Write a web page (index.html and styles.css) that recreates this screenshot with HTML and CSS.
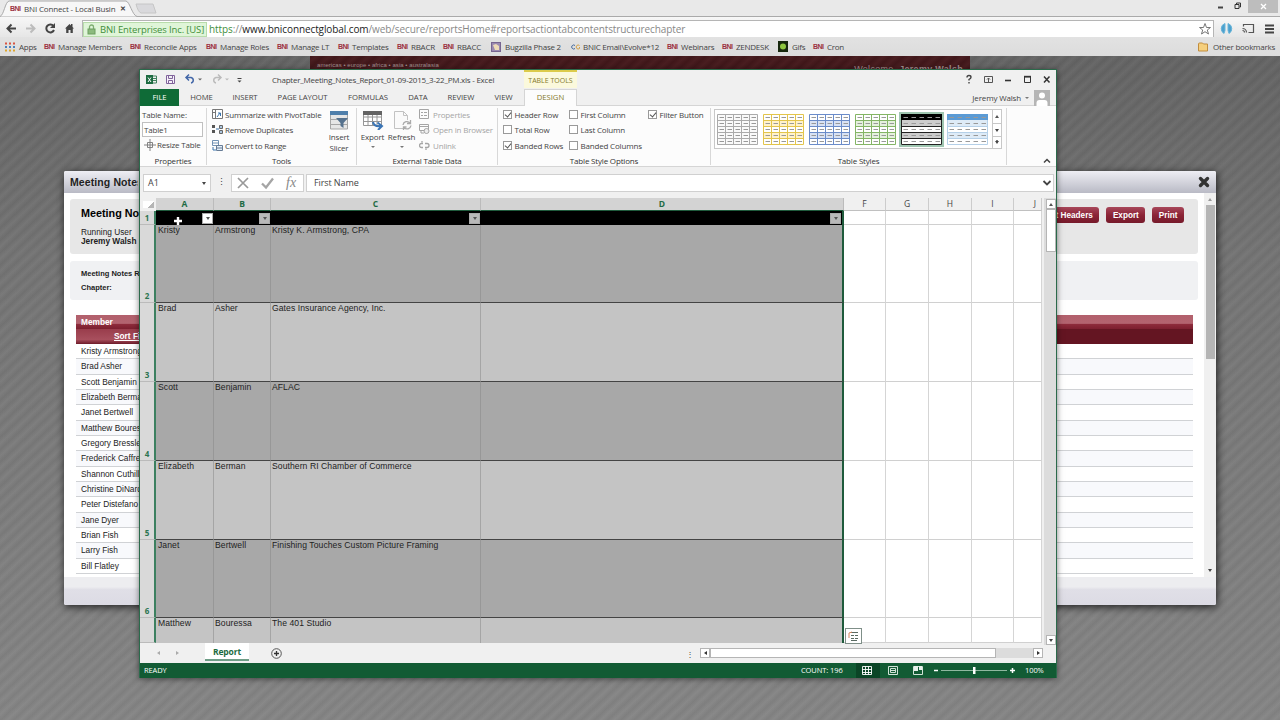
FILE: index.html
```html
<!DOCTYPE html>
<html lang="en">
<head>
  <meta charset="UTF-8">
  <title>BNI Connect - Local Business</title>
  <link rel="stylesheet" href="styles.css">
</head>
<body>

<svg class="defs" width="0" height="0">
  <symbol id="table-lines" viewBox="0 0 41 31">
    <path d="M.5.5h40v30H.5zM.5 6.5h40M.5 12.5h40M.5 18.5h40M.5 24.5h40M8.5 0v31M16.5 0v31M24.5 0v31M32.5 0v31" fill="none" stroke="currentColor"/>
  </symbol>
  <symbol id="table-dashes" viewBox="0 0 41 31">
    <path d="M2.500 3.500h37M2.500 9.500h37M2.500 15.500h37M2.500 21.500h37M2.500 27.500h37" fill="none" stroke="currentColor" stroke-dasharray="4.500 3.500"/>
  </symbol>
</svg>

<header class="browser">
  <div class="tab-strip">
    <svg class="tab-shape" width="160" height="17" viewBox="0 0 160 17">
      <path d="M0 16.5C4 15 5 2 9 1H126C130 2 132 15 137 16.5" fill="#f7f7f7" stroke="#aaa"/>
      <path d="M136 4H153L156 13H141Q138 12 136 4z" fill="#d9d9dc" stroke="#c6c6c6"/>
    </svg>
    <div class="tab-text"><b class="bni">BNI</b><span class="tab-name">BNI Connect - Local Busin</span><span class="tab-x">✕</span></div>
    <div class="window-buttons">
      <svg width="66" height="13" viewBox="0 0 66 13">
        <path d="M5 7.5h5" stroke="#444" stroke-width="2"/>
        <path d="M22 4.500h4v4h-4zM23.500 4v-1h4v4h-1" fill="none" stroke="#333"/>
        <rect x="35" width="30" height="13" fill="#bdbdbd"/>
        <path d="M48 4l5 5M53 4l-5 5" stroke="#fff" stroke-width="1.300"/>
      </svg>
    </div>
  </div>

  <div class="toolbar">
    <svg class="nav-icons" width="82" height="20" viewBox="0 0 82 20">
      <path d="M16 11.500H8M11.500 7.500l-4 4 4 4" fill="none" stroke="#444" stroke-width="2"/>
      <path d="M26 11.500h8M30.500 7.500l4 4-4 4" fill="none" stroke="#bcbcbc" stroke-width="2"/>
      <path d="M53.500 9A4 4 0 1 0 54 13" fill="none" stroke="#444" stroke-width="2"/>
      <path d="M55 6v5h-5z" fill="#444"/>
      <path d="M65 11.500l4.500-4.500 1.500 1.500V7h1.500v3l1.500 1.500h-1.200V16h-2.300v-3h-2v3H66.200v-4.500z" fill="#444"/>
    </svg>
    <div class="address">
      <div class="ssl">
        <svg width="9" height="11" viewBox="0 0 9 11"><path d="M2.500 5V3a2 2 0 0 1 4 0v2" fill="none" stroke="#7dad70" stroke-width="1.300"/><rect x="1" y="5" width="7" height="5" fill="#8cbb7d" stroke="#6c9e60"/></svg>
        <span>BNI Enterprises Inc. [US]</span>
      </div>
      <div class="url"><span class="scheme">https</span>://<span class="host">www.bniconnectglobal.com</span>/web/secure/reportsHome#reportsactiontabcontentstructurechapter</div>
      <svg class="star" width="14" height="14" viewBox="0 0 14 14"><path d="M7 1.500l1.500 4h4L9.300 8l1.200 4L7 9.700 3.500 12l1.200-4L1.500 5.500h4z" fill="#fff" stroke="#777"/></svg>
    </div>
    <svg width="66" height="20" viewBox="0 0 66 20">
      <path d="M11 6.500a5.500 5.500 0 0 0-1 10l1-3V9zM14 6.500a5.500 5.500 0 0 1 1 10l-1-3V9z" fill="#4da0cd" stroke="#68b6da"/>
      <path d="M29.500 9.500v-2h10v8h-5M28.500 11.500a4 4 0 0 1 4 4M28.500 13.500a2 2 0 0 1 2 2" fill="none" stroke="#555" stroke-width="1.200"/>
      <path d="M51 8.500h9M51 12h9M51 15.500h9" stroke="#444" stroke-width="2"/>
    </svg>
  </div>

  <nav class="bookmarks">
    <a><svg width="10" height="10" viewBox="0 0 10 10"><path d="M0 1.500h10" stroke="#d75442" stroke-width="2" stroke-dasharray="2 2"/><path d="M0 5h10" stroke="#4a80bc" stroke-width="2" stroke-dasharray="2 2"/><path d="M0 8.500h10" stroke="#dda62d" stroke-width="2" stroke-dasharray="2 2"/></svg><span class="apps">Apps</span></a>
    <a><b class="bni">BNI</b>Manage Members</a>
    <a><b class="bni">BNI</b>Reconcile Apps</a>
    <a><b class="bni">BNI</b>Manage Roles</a>
    <a><b class="bni">BNI</b>Manage LT</a>
    <a><b class="bni">BNI</b>Templates</a>
    <a><b class="bni">BNI</b>RBACR</a>
    <a><b class="bni">BNI</b>RBACC</a>
    <a><svg width="14" height="10" viewBox="0 0 14 10"><rect x=".5" y=".5" width="9" height="9" fill="#9b8ab0" stroke="#776590"/><path d="M2 3l3-1 3 2v4H4z" fill="#efdcb7"/></svg>Bugzilla Phase 2</a>
    <a><svg width="13" height="10" viewBox="0 0 13 10"><path d="M5 3.500a2 2 0 1 0 0 3" fill="none" stroke="#456a9c"/><path d="M9.500 3.500a2 2 0 1 0 0 3V5" fill="none" stroke="#d3a044"/></svg>BNIC Email\Evolve*12</a>
    <a><b class="bni">BNI</b>Webinars</a>
    <a><b class="bni">BNI</b>ZENDESK</a>
    <a><svg width="14" height="11" viewBox="0 0 14 11"><rect width="10" height="11" fill="#17280d"/><circle cx="5" cy="5.500" r="3" fill="#8ec63f"/></svg>Gifs</a>
    <a><b class="bni">BNI</b>Cron</a>
    <a class="other"><svg width="15" height="10" viewBox="0 0 15 10"><path d="M.5 2q0-1 1-1h3l1 1h4v7h-9z" fill="#f5cf7d" stroke="#c18d3e"/></svg>Other bookmarks</a>
  </nav>
</header>

<main class="page">
  <div class="site-bar">
    <span class="regions">americas • europe • africa • asia • australasia</span>
    <span class="welcome">Welcome, <b>Jeremy Walsh</b></span>
  </div>

  <section class="dialog">
    <div class="dialog-title">
      <span>Meeting Notes</span>
      <svg width="12" height="12" viewBox="0 0 12 12"><path d="M2.500 2.500l7 7M9.500 2.500l-7 7" stroke="#333" stroke-width="3.400" stroke-linecap="round"/></svg>
    </div>
    <div class="dialog-body">
      <div class="report">
        <div class="report-head">
          <div class="report-user">
            <h2>Meeting Notes</h2>
            <p>Running User</p>
            <p><b>Jeremy Walsh</b></p>
          </div>
          <div class="actions"><button>Edit Headers</button><button>Export</button><button>Print</button></div>
        </div>
        <div class="report-params">
          <div>Meeting Notes Report</div>
          <div>Chapter:</div>
        </div>
        <div class="members">
          <div class="members-head">Member</div>
          <div class="members-sort">Sort First</div>
          <div class="member">Kristy Armstrong</div>
          <div class="member">Brad Asher</div>
          <div class="member">Scott Benjamin</div>
          <div class="member">Elizabeth Berman</div>
          <div class="member">Janet Bertwell</div>
          <div class="member">Matthew Bouressa</div>
          <div class="member">Gregory Bressler</div>
          <div class="member">Frederick Caffrey</div>
          <div class="member">Shannon Cuthill</div>
          <div class="member">Christine DiNardo</div>
          <div class="member">Peter Distefano</div>
          <div class="member">Jane Dyer</div>
          <div class="member">Brian Fish</div>
          <div class="member">Larry Fish</div>
          <div class="member">Bill Flatley</div>
        </div>
      </div>
      <div class="dialog-scroll"><i class="up"></i><div class="thumb"></div><i class="down"></i></div>
    </div>
    <div class="dialog-foot"></div>
  </section>

  <section class="excel">
    <div class="title-bar">
      <svg width="112" height="18" viewBox="0 0 112 18">
        <rect x="6" y="5" width="7" height="9" fill="#1d6b41"/><path d="M8 7.500l3 4.500M11 7.500l-3 4.500" stroke="#fff"/><path d="M13 6h3.500v7H13M13 8.500h3M13 10.500h3" fill="none" stroke="#42815f"/>
        <path d="M26.500 5.500h8v8h-8zM28.500 5.500v3h4v-3M28.500 13v-2.500h4V13" fill="#f7f2fa" stroke="#80639b"/>
        <path d="M46 7.500h5a2.800 2.800 0 0 1 0 5.500M49 4.500l-3 3 3 3" fill="none" stroke="#4367a8" stroke-width="1.500"/>
        <path d="M58 8.500h4l-2 2z" fill="#666"/>
        <path d="M81 7.500h-5a2.800 2.800 0 0 0 0 5.500M78 4.500l3 3-3 3" fill="none" stroke="#bbb" stroke-width="1.500"/>
        <path d="M85 8.500h4l-2 2z" fill="#bbb"/>
        <path d="M97.500 8.500h4" stroke="#444"/><path d="M97.500 10.500h4l-2 2z" fill="#444"/>
      </svg>
      <span class="file-name">Chapter_Meeting_Notes_Report_01-09-2015_3-22_PM.xls - Excel</span>
      <span class="table-tools">TABLE TOOLS</span>
      <svg class="title-icons" width="94" height="18" viewBox="0 0 94 18">
        <path d="M5 7.500q0-2 2-2t2 1.700q0 1-2 2.300v1M7 12v1.500" fill="none" stroke="#444" stroke-width="1.400"/>
        <path d="M22.500 6.500h8v6h-8zM26.500 12V8M25 9.500L26.500 8 28 9.500" fill="none" stroke="#555"/>
        <path d="M43 10.500h6" stroke="#333" stroke-width="1.600"/>
        <path d="M62.500 6.500h6v6h-6zM62 6.500h7" fill="none" stroke="#333"/><path d="M62 6.700h7" stroke="#333" stroke-width="1.800"/>
        <path d="M82 6.500l5.500 6M87.500 6.500l-5.500 6" stroke="#333" stroke-width="1.500"/>
      </svg>
    </div>

    <div class="ribbon-tabs">
      <span class="file">FILE</span>
      <span>HOME</span>
      <span>INSERT</span>
      <span>PAGE LAYOUT</span>
      <span>FORMULAS</span>
      <span>DATA</span>
      <span>REVIEW</span>
      <span>VIEW</span>
      <span class="active">DESIGN</span>
      <span class="account">Jeremy Walsh<i class="caret"></i>
        <svg width="16" height="16" viewBox="0 0 16 16"><rect width="16" height="16" fill="#b5b5b5"/><circle cx="8" cy="5.500" r="3" fill="#fff"/><path d="M2.500 16v-3q0-3 3-3h5q3 0 3 3v3z" fill="#fff"/></svg>
      </span>
    </div>

    <div class="ribbon">
      <div class="group properties">
        <div class="lines">
          <span>Table Name:</span>
          <span class="name-input">Table1</span>
          <span class="resize"><svg width="12" height="12" viewBox="0 0 12 12"><path d="M3.500 3.500h5v5h-5zM6 0v3M6 9v3M0 6h3M9 6h3M3.500 6h5M6 3.500v5" fill="none" stroke="#777" stroke-width=".9"/></svg>Resize Table</span>
        </div>
        <div class="label">Properties</div>
      </div>

      <div class="group tools">
        <div class="row">
          <div class="lines">
            <span><svg width="12" height="11" viewBox="0 0 12 11"><path d="M.5.5h10v9H.5zM3.500.5v9M.5 3.500h3" fill="#fff" stroke="#777"/><path d="M5 8l3-4M8.500 7V4H6" fill="none" stroke="#3b75ad"/></svg>Summarize with PivotTable</span>
            <span><svg width="12" height="11" viewBox="0 0 12 11"><path d="M0 1h3v3H0zM0 6h3v3H0z" fill="#555"/><path d="M4 5h3" stroke="#3b75ad"/><path d="M7.500 1.500h3v3h-3zM7.500 6.500h3v3h-3z" fill="#acc6df" stroke="#666"/></svg>Remove Duplicates</span>
            <span><svg width="12" height="11" viewBox="0 0 12 11"><path d="M.5.500h6v5h-6zM.5 3h6" fill="#fff" stroke="#7191b3"/><path d="M4.500 5.500h6v5h-6zM4.500 8h6" fill="#e3edf7" stroke="#677c96"/><path d="M1 7v3h3" fill="none" stroke="#3b75ad"/></svg>Convert to Range</span>
          </div>
          <div class="big">
            <svg width="22" height="20" viewBox="0 0 22 20"><rect x="2" y="1" width="18" height="4" fill="#4f7fab"/><path d="M2.500 5v14h17V5M2 9.500h18M2 14.500h18" fill="#e6e6e6" stroke="#a6a6a6"/><path d="M8 8h12l-4.500 5v5l-3-2v-3z" fill="#56728e"/></svg>
            <span>Insert<br>Slicer</span>
          </div>
        </div>
        <div class="label">Tools</div>
      </div>

      <div class="group external">
        <div class="row">
          <div class="big">
            <svg width="22" height="20" viewBox="0 0 22 20"><path d="M1.500 2.500h18v13h-18zM1.500 7h18M1.500 11.500h18M6 2.500v13M10.500 2.500v13M15 2.500v13" fill="#fff" stroke="#969696"/><rect x="1" y="1" width="19" height="4" fill="#646464"/><path d="M11 12q1 5 8 4M15.500 12.500L20 16l-4 4" fill="none" stroke="#3b75b5" stroke-width="2"/></svg>
            <span>Export</span><i class="caret"></i>
          </div>
          <div class="big">
            <svg width="22" height="20" viewBox="0 0 22 20"><path d="M3.500 1.500h9l4 4v13h-13zM12.500 1.500v4h4" fill="#fafafa" stroke="#c2c2c2"/><circle cx="16" cy="15" r="5" fill="#fafafa"/><path d="M12 15a4 4 0 0 1 7-2M20 15.500a4 4 0 0 1-7 2M19.500 10v3.500H16M12.500 20v-3h3" fill="none" stroke="#aaa" stroke-width="1.300"/></svg>
            <span>Refresh</span><i class="caret"></i>
          </div>
          <div class="lines off">
            <span><svg width="13" height="11" viewBox="0 0 13 11"><path d="M.5.5h9v9h-9zM2 3.500h2M5 3.500h3M2 6.500h2M5 6.500h3" fill="none" stroke="#a5a5a5"/></svg>Properties</span>
            <span><svg width="13" height="11" viewBox="0 0 13 11"><path d="M.5.500h9v6h-9zM.5 2.500h9M2 6v3h3" fill="none" stroke="#a5a5a5"/><circle cx="7.500" cy="7" r="2.500" fill="#eee" stroke="#a5a5a5"/></svg>Open in Browser</span>
            <span><svg width="13" height="11" viewBox="0 0 13 11"><path d="M4 3.500H2.500a2 2 0 0 0 0 4H4M6 3.500h2a2 2 0 0 1 0 4H6M3 1v1.500M7 8.500V10" fill="none" stroke="#a5a5a5" stroke-width="1.300"/></svg>Unlink</span>
          </div>
        </div>
        <div class="label">External Table Data</div>
      </div>

      <div class="group options">
        <div class="checks">
          <span><i class="box on"></i>Header Row</span><span><i class="box"></i>First Column</span><span><i class="box on"></i>Filter Button</span>
          <span><i class="box"></i>Total Row</span><span><i class="box"></i>Last Column</span><span></span>
          <span><i class="box on"></i>Banded Rows</span><span><i class="box"></i>Banded Columns</span><span></span>
        </div>
        <div class="label">Table Style Options</div>
      </div>

      <div class="group styles">
        <div class="gallery">
          <svg class="swatch plain" width="41" height="31"><path class="fill" d="M0 0h41v31H0z"/><use href="#table-lines"/><use class="dashes" href="#table-dashes"/></svg>
          <svg class="swatch yellow" width="41" height="31"><path class="fill" d="M0 6h41v6H0zM0 18h41v6H0z"/><use href="#table-lines"/><use class="dashes" href="#table-dashes"/></svg>
          <svg class="swatch blue" width="41" height="31"><path class="fill" d="M0 6h41v6H0zM0 18h41v6H0z"/><use href="#table-lines"/><use class="dashes" href="#table-dashes"/></svg>
          <svg class="swatch green" width="41" height="31"><path class="fill" d="M0 6h41v6H0zM0 18h41v6H0z"/><use href="#table-lines"/><use class="dashes" href="#table-dashes"/></svg>
          <svg class="swatch black" width="41" height="31"><path class="fill" d="M0 6h41v6H0zM0 18h41v6H0z"/><path d="M.5.5h40v30H.5zM0 12.500h41M0 18.500h41M0 24.500h41" fill="none" stroke="#222"/><path d="M0 0h41v6H0z"/><use class="dashes" href="#table-dashes"/></svg>
          <svg class="swatch sky" width="41" height="31"><path class="fill" d="M0 6h41v6H0zM0 18h41v6H0z"/><path d="M.5.5h40v30H.5zM0 12.500h41M0 18.500h41M0 24.500h41" fill="none" stroke="#b5d0e8"/><path d="M0 0h41v6H0z" fill="#5b9bd5"/><use class="dashes" href="#table-dashes"/></svg>
          <div class="gallery-scroll"><span><i class="up"></i></span><span><i class="down"></i></span><span><i class="down more"></i></span></div>
        </div>
        <div class="label">Table Styles</div>
      </div>

      <div class="collapse"><svg width="8" height="6" viewBox="0 0 8 6"><path d="M1 4.500l3-3 3 3" fill="none" stroke="#444" stroke-width="1.500"/></svg></div>
    </div>

    <div class="formula-bar">
      <div class="cell-name">A1<i class="down"></i></div>
      <div class="dots">⋮</div>
      <div class="fx">
        <svg width="54" height="16" viewBox="0 0 54 16"><path d="M6 3l10 10M16 3L6 13" stroke="#999" stroke-width="1.700"/><path d="M30 8.500l4 4 7-9" fill="none" stroke="#a5a5a5" stroke-width="2.300"/></svg>
        <em>fx</em>
      </div>
      <div class="formula">First Name<svg width="10" height="8" viewBox="0 0 10 8"><path d="M1.500 2L5 5.500 8.500 2" fill="none" stroke="#444" stroke-width="1.800"/></svg></div>
    </div>

    <div class="work">
      <div class="sheet">
        <div class="corner"></div><div class="col sel">A</div><div class="col sel">B</div><div class="col sel">C</div><div class="col sel">D</div><div class="col">F</div><div class="col">G</div><div class="col">H</div><div class="col">I</div><div class="col last">J</div>

        <div class="num">1</div><div class="th"><b class="filter lit"></b></div><div class="th"><b class="filter"></b></div><div class="th"><b class="filter"></b></div><div class="th edge"><b class="filter"></b></div><div class="cell"></div><div class="cell"></div><div class="cell"></div><div class="cell"></div><div class="cell"></div>

        <div class="num">2</div><div class="td dark first">Kristy</div><div class="td dark">Armstrong</div><div class="td dark">Kristy K. Armstrong, CPA</div><div class="td dark edge"></div><div class="cell"></div><div class="cell"></div><div class="cell"></div><div class="cell"></div><div class="cell"></div>

        <div class="num">3</div><div class="td first">Brad</div><div class="td">Asher</div><div class="td">Gates Insurance Agency, Inc.</div><div class="td edge"></div><div class="cell"></div><div class="cell"></div><div class="cell"></div><div class="cell"></div><div class="cell"></div>

        <div class="num">4</div><div class="td dark first">Scott</div><div class="td dark">Benjamin</div><div class="td dark">AFLAC</div><div class="td dark edge"></div><div class="cell"></div><div class="cell"></div><div class="cell"></div><div class="cell"></div><div class="cell"></div>

        <div class="num">5</div><div class="td first">Elizabeth</div><div class="td">Berman</div><div class="td">Southern RI Chamber of Commerce</div><div class="td edge"></div><div class="cell"></div><div class="cell"></div><div class="cell"></div><div class="cell"></div><div class="cell"></div>

        <div class="num">6</div><div class="td dark first">Janet</div><div class="td dark">Bertwell</div><div class="td dark">Finishing Touches Custom Picture Framing</div><div class="td dark edge"></div><div class="cell"></div><div class="cell"></div><div class="cell"></div><div class="cell"></div><div class="cell"></div>

        <div class="num"></div><div class="td first">Matthew</div><div class="td">Bouressa</div><div class="td">The 401 Studio</div><div class="td edge"></div><div class="cell"></div><div class="cell"></div><div class="cell"></div><div class="cell"></div><div class="cell"></div>
      </div>
      <div class="v-scroll"><span><i class="up"></i></span><div class="thumb"></div><span><i class="down"></i></span></div>

      <svg class="cursor" width="10" height="10" viewBox="0 0 10 10"><path d="M5 1v8M1 5h8" stroke="#fff" stroke-width="2.400"/></svg>
      <svg class="quick" width="17" height="16" viewBox="0 0 17 16"><rect x=".5" y=".5" width="16" height="15" fill="#fff" stroke="#7f8f88"/><path d="M6 4.500h7M6 7.500h3M10 7.500h3M6 10.500h3M10 10.500h3M6 12.500h6" stroke="#5b6b63"/><path d="M4 10V5l3-1" fill="none" stroke="#d98660"/></svg>
    </div>

    <div class="sheet-tabs">
      <i class="left"></i><i class="right"></i>
      <span class="sheet-tab">Report</span>
      <svg class="add" width="11" height="11" viewBox="0 0 11 11"><circle cx="5.500" cy="5.500" r="4.800" fill="none" stroke="#555"/><path d="M5.500 3v5M3 5.500h5" stroke="#333" stroke-width="1.300"/></svg>
      <span class="grip">⋮</span>
      <div class="h-scroll"><span><i class="left dark"></i></span><div class="thumb"></div><span><i class="right dark"></i></span></div>
    </div>

    <div class="status">
      <span class="ready">READY</span>
      <span class="count">COUNT: 196</span>
      <svg width="164" height="15" viewBox="0 0 164 15">
        <rect width="24" height="15" fill="#0b4526"/>
        <path d="M6.500 3.500h9v8h-9zM9.500 3.500v8M12.500 3.500v8M6 6.500h10M6 9.500h10" fill="none" stroke="#fff" stroke-width=".9"/>
        <path d="M32.500 3.500h9v8h-9zM34.500 5.500h5v4h-5zM35 7.500h4" fill="none" stroke="#d2e3d8"/>
        <path d="M57.500 3.500h9v8h-9z" fill="none" stroke="#d2e3d8"/><path d="M58 3h4v5h-4zM63 3h3v4h-3z" fill="#e8f0eb"/>
        <path d="M78 7.500h4M154 7.500h5M156.500 5v5" stroke="#fff" stroke-width="1.500"/>
        <path d="M85 7.500h66" stroke="#8fb8a0"/><rect x="117" y="4" width="2.500" height="7" fill="#fff"/>
      </svg>
      <span class="zoom">100%</span>
    </div>
  </section>
</main>

</body>
</html>
```
FILE: styles.css
```css
* {
  box-sizing: border-box;
}
body {
  margin: 0;
  width: 1280px;
  height: 720px;
  overflow: hidden;
  font-family: "Open Sans", sans-serif;
  color: #444;
}
.defs {
  position: absolute;
}
svg {
  display: block;
  flex: none;
}

/* small arrows shared by scrollbars and menus */
.up, .down, .caret, .left, .right {
  display: block;
  width: 0;
  height: 0;
  border: 2.5px solid transparent;
}
.up {
  border-top: 0;
  border-bottom: 3px solid #555;
}
.down {
  border-bottom: 0;
  border-top: 3px solid #444;
}
.caret {
  border-width: 2px;
  border-bottom: 0;
  border-top: 2.5px solid #777;
}
.left {
  border-left: 0;
  border-right: 3px solid #aaa;
}
.right {
  border-right: 0;
  border-left: 3px solid #aaa;
}
.left.dark { border-right-color: #333; }
.right.dark { border-left-color: #333; }

/* browser */
.browser {
  height: 56px;
  background: #e9e9e9;
  white-space: nowrap;
}
.tab-strip {
  height: 17px;
  display: flex;
  border-bottom: 1px solid #aaa;
  position: relative;
}
.tab-shape {
  position: absolute;
  left: 0;
  top: 0;
}
.tab-text {
  display: flex;
  align-items: center;
  position: relative;
  padding-left: 10px;
  width: 140px;
  font-size: 8px;
}
.tab-name {
  width: 96px;
  letter-spacing: -0.15px;
}
.bni {
  color: #9c3242;
  font-family: "Liberation Sans", sans-serif;
  font-size: 7px;
  letter-spacing: -0.5px;
  width: 14px;
  flex: none;
}
.tab-x {
  font-size: 7px;
  font-weight: bold;
}
.window-buttons {
  margin-left: auto;
  padding-right: 1px;
}
.toolbar {
  height: 20px;
  display: flex;
  background: linear-gradient(#f7f7f7, #e6e6e6);
}
.address {
  margin-top: 3px;
  height: 17px;
  width: 1132px;
  background: #fff;
  border: 1px solid #b5b5b5;
  border-bottom: 0;
  display: flex;
  align-items: center;
}
.ssl {
  display: flex;
  align-items: center;
  gap: 4px;
  width: 124px;
  height: 15px;
  padding-left: 3px;
  background: #dff5d8;
  border: 1px solid #b8dcab;
  color: #3f8f3a;
  font-size: 9.5px;
  letter-spacing: -0.13px;
}
.url {
  margin-left: 2px;
  font-size: 10px;
  letter-spacing: -0.1px;
  color: #888;
}
.scheme { color: #3f8f3a; }
.host { color: #222; }
.star {
  margin-left: auto;
  margin-right: 1px;
}
.bookmarks {
  height: 19px;
  display: grid;
  grid-template-columns: 39px 86px 76px 71px 61px 59px 46px 48px 79px 97px 55px 56px 35px 60px 1fr;
  align-items: center;
  padding: 0 5px;
  background: linear-gradient(#e2e2e2, #dcdcdc);
  font-size: 8px;
  letter-spacing: -0.25px;
}
.bookmarks a {
  display: flex;
  align-items: center;
}
.apps { margin-left: 4px; }
.other { justify-content: flex-end; }

/* page behind the windows */
.page {
  position: relative;
  height: 664px;
  background:
    repeating-linear-gradient(137deg, rgba(0,0,0,0.045), rgba(255,255,255,0.03) 4.5px, rgba(0,0,0,0.045) 9px),
    linear-gradient(#646464, #747474 30%, #858585);
}
.site-bar {
  width: 660px;
  height: 20px;
  margin-left: 310px;
  padding: 0 7px;
  display: flex;
  justify-content: space-between;
  background: repeating-linear-gradient(137deg, #40171a, #4a1e21 4.5px, #40171a 9px);
  font-family: "Liberation Sans", sans-serif;
  color: #a39091;
}
.regions {
  font-size: 6px;
  padding-top: 6px;
  letter-spacing: 0.05px;
}
.welcome {
  font-size: 9px;
  padding-top: 8px;
  letter-spacing: 0.3px;
}

/* report dialog */
.dialog {
  position: absolute;
  left: 64px;
  top: 115px;
  width: 1152px;
  height: 434px;
  background: #fff;
  border-radius: 2px;
  box-shadow: 1px 2px 9px rgba(0,0,0,0.75);
  font-family: "Liberation Sans", sans-serif;
  color: #222;
}
.dialog-title {
  height: 22px;
  padding: 0 6px;
  display: flex;
  justify-content: space-between;
  align-items: center;
  background: linear-gradient(#eeeef4, #b9bac5);
  border-radius: 2px 2px 0 0;
  font-size: 10.5px;
  font-weight: bold;
}
.dialog-title span {
  width: 68px;
  overflow: hidden;
  white-space: nowrap;
  letter-spacing: 0.1px;
}
.dialog-body {
  height: 384px;
  display: flex;
  justify-content: space-between;
}
.report {
  width: 1134px;
  padding: 6px 0 0 6px;
}
.report-head {
  height: 55px;
  padding: 8px 14px 0 11px;
  display: flex;
  justify-content: space-between;
  background: #e7e7e7;
  border-radius: 3px;
}
.report-user {
  width: 58px;
  overflow: hidden;
  white-space: nowrap;
}
h2 {
  margin: 0 0 9px;
  font-size: 10.8px;
  line-height: 12px;
  color: #000;
}
.report-head p {
  margin: 0;
  font-size: 8.3px;
  line-height: 9px;
}
.actions {
  display: flex;
  align-items: flex-start;
  gap: 7px;
}
.actions button {
  height: 16px;
  padding: 0 6.5px;
  border: 0;
  border-radius: 3px;
  background: linear-gradient(#a8475a, #8c2437 50%, #761a2b);
  color: #fff;
  font: bold 8.2px "Liberation Sans", sans-serif;
}
.report-params {
  height: 39px;
  margin-top: 7px;
  padding: 6px 6px 0 11px;
  background: #f0f1f3;
  border-radius: 3px;
  font-size: 7.5px;
  font-weight: bold;
  line-height: 14px;
}
.members {
  width: 1117px;
  margin: 15px 0 0 6px;
  font-size: 8.3px;
}
.members-head, .members-sort {
  height: 14px;
  padding-left: 5px;
  line-height: 14px;
  font-weight: bold;
  color: #fff;
}
.members-head {
  background: linear-gradient(#b2606c, #b36470 60%, #8e2c3c 65%, #7c1f2f);
}
.members-sort {
  padding-left: 38px;
  height: 15px;
  text-decoration: underline;
  background: linear-gradient(90deg, transparent 900px, #641522 900px), linear-gradient(#993d4c, #a84f5d 70%, #6e1b29);
}
.member {
  height: 15.33px;
  padding-left: 5px;
  line-height: 15px;
  border-bottom: 1px solid #d0d2d5;
}
.member:nth-child(even) {
  background: #f8f9fc;
}
.dialog-scroll {
  width: 12px;
  display: flex;
  flex-direction: column;
  align-items: center;
  background: #f0f0f0;
  padding: 5px 0;
}
.dialog-scroll .thumb {
  width: 9px;
  height: 154px;
  margin: 4px 0 auto;
  background: #b5b5b5;
}
.dialog-scroll .up { border-bottom-color: #999; }
.dialog-foot {
  height: 28px;
  background: linear-gradient(#ededf0 35%, #e0dfe7 45%, #dcdbe4);
  border-radius: 0 0 2px 2px;
}

/* excel window */
.excel {
  position: absolute;
  left: 139px;
  top: 13px;
  width: 918px;
  height: 609px;
  border: 1px solid #2b6a4b;
  background: #f0f0f0;
  box-shadow: 0 1px 6px rgba(0,0,0,0.5);
  font-size: 8px;
  white-space: nowrap;
}
.title-bar {
  height: 19px;
  display: flex;
}
.file-name {
  width: 272px;
  padding-left: 20px;
  line-height: 20px;
  letter-spacing: -0.24px;
}
.table-tools {
  width: 53px;
  height: 18px;
  background: #fbf9dc;
  border-top: 2px solid #dccb4b;
  text-align: center;
  line-height: 17px;
  font-size: 7px;
  color: #857a2b;
}
.title-icons {
  margin-left: auto;
}
.ribbon-tabs {
  height: 16px;
  display: grid;
  grid-template-columns: 39px 45px 42px 73px 58px 42px 44px 41px 53px 1fr;
  line-height: 16px;
  text-align: center;
  font-size: 7.7px;
  letter-spacing: -0.05px;
}
.ribbon-tabs .file {
  background: #0f6b37;
  color: #fff;
}
.ribbon-tabs .active {
  height: 17px;
  background: #fcfcfc;
  border: 1px solid #d5d5d5;
  border-bottom: 0;
  line-height: 15px;
  color: #857a2b;
  z-index: 1;
}
.account {
  display: flex;
  justify-content: flex-end;
  align-items: center;
  padding-right: 6px;
  font-size: 8px;
  letter-spacing: -0.15px;
}
.account .caret {
  margin: 0 5px 0 4px;
}
.ribbon {
  height: 62px;
  display: grid;
  grid-template-columns: 67px 150px 141px 213px 296px 1fr;
  background: #fcfcfc;
  border-top: 1px solid #d5d5d5;
  border-bottom: 1px solid #d5d5d5;
  letter-spacing: -0.18px;
}
.group {
  height: 57px;
  margin-top: 2px;
  border-right: 1px solid #d8d8d8;
}
.row {
  display: flex;
}
.lines {
  margin: -1.4px 0 1.4px;
}
.lines > span {
  display: flex;
  align-items: center;
  height: 15.4px;
}
.lines > span svg {
  margin-right: 1px;
}
.label {
  text-align: center;
  line-height: 14px;
  color: #333;
}
.properties .lines {
  padding-left: 2px;
}
.properties .name-input {
  width: 61px;
  height: 15px;
  padding-left: 1px;
  background: #fff;
  border: 1px solid #c0c0c0;
}
.properties .resize {
  padding-left: 2px;
}
.tools .row {
  padding-left: 5px;
}
.tools .lines {
  width: 116px;
}
.big {
  display: flex;
  flex-direction: column;
  align-items: center;
  text-align: center;
  line-height: 10.5px;
  height: 46.2px;
}
.big svg {
  margin: 2px 0;
}
.external .big {
  width: 29px;
}
.external .row {
  padding-left: 1px;
}
.external .big span {
  margin-bottom: 3px;
}
.external .lines {
  padding-left: 3px;
}
.off {
  color: #a5a5a5;
}
.checks {
  display: grid;
  grid-template-columns: 66px 79px 60px;
  grid-auto-rows: 15.4px;
  margin: -1.4px 0 1.4px;
  padding-left: 4.5px;
}
.checks span {
  display: flex;
  align-items: center;
}
.box {
  width: 9px;
  height: 9px;
  margin-right: 3px;
  border: 1px solid #9a9a9a;
  background: #fff;
}
.box.on::after {
  content: "";
  display: block;
  width: 3px;
  height: 5px;
  margin-left: 2px;
  border: solid #555;
  border-width: 0 1px 1px 0;
  transform: rotate(40deg);
}
.gallery {
  width: 288px;
  height: 40px;
  margin: 1px 0 5px 3px;
  padding: 0 0 0 2px;
  display: flex;
  align-items: center;
  gap: 5px;
  background: #fff;
  border: 1px solid #c8c8c8;
}
.gallery + .label {
  line-height: 13px;
}
.swatch .dashes { color: #999; }
.plain { color: #aaa; }
.plain .fill { fill: #fafafa; }
.yellow { color: #e3c54c; }
.yellow .fill { fill: #fff2cc; }
.blue { color: #6b8cc9; }
.blue .fill { fill: #d9e2f3; }
.green { color: #84b565; }
.green .fill { fill: #e5f1dd; }
.black {
  outline: 2px solid #9fc6b1;
}
.black .fill { fill: #ccc; }
.sky .fill { fill: #deebf7; }
.gallery-scroll {
  width: 10px;
  height: 38px;
  margin-left: -1px;
  display: grid;
  grid-template-rows: 14px 13px 11px;
  border-left: 1px solid #c8c8c8;
}
.gallery-scroll span {
  display: flex;
  align-items: center;
  justify-content: center;
  border-bottom: 1px solid #c8c8c8;
}
.gallery-scroll span:last-child { border-bottom: 0; }
.gallery-scroll i {
  border-left-width: 2px;
  border-right-width: 2px;
}
.gallery-scroll .more {
  box-shadow: 0 -2px 0 -1px #777;
}
.collapse {
  display: flex;
  align-items: flex-end;
  justify-content: flex-end;
  padding: 0 5px 2px 0;
}

.formula-bar {
  height: 18px;
  margin-top: 7px;
  display: flex;
  line-height: 16px;
  font-size: 9px;
}
.cell-name {
  width: 68px;
  margin-left: 3px;
  padding: 0 4px;
  display: flex;
  align-items: center;
  justify-content: space-between;
  background: #fff;
  border: 1px solid #d0d0d0;
}
.dots {
  width: 20px;
  text-align: center;
}
.fx {
  width: 73px;
  display: flex;
  background: #fff;
  border: 1px solid #d0d0d0;
}
.fx em {
  font: italic 14px/15px "Liberation Serif", serif;
  color: #888;
}
.formula {
  width: 748px;
  margin-left: 2px;
  padding: 0 1px 0 7px;
  display: flex;
  align-items: center;
  justify-content: space-between;
  background: #fff;
  border: 1px solid #d0d0d0;
  letter-spacing: -0.1px;
}

.work {
  position: relative;
  margin-top: 6px;
  height: 445px;
  display: flex;
}
.sheet {
  display: grid;
  grid-template-columns: 16px 58px 57px 210px 363px 42px 43px 43px 42px 28px;
  grid-template-rows: 13px 14px 78px 79px 79px 79px 78px 25px;
  background: #fff;
}
.corner {
  background: linear-gradient(135deg, transparent 62%, #b5b5b5 62%);
  border: 3px solid #f0f0f0;
  border-right-width: 2px;
}
.col {
  text-align: center;
  line-height: 12px;
  font-size: 8.5px;
  background: #f0f0f0;
  border-right: 1px solid #ccc;
  border-bottom: 1px solid #c0c0c0;
}
.col.last {
  text-align: right;
  padding-right: 5px;
}
.col.sel {
  background: #d3d3d3;
  border-right-color: #bbb;
  border-bottom: 1px solid #1f5b3c;
  font-weight: bold;
  color: #1f6b45;
}
.num {
  display: flex;
  align-items: flex-end;
  justify-content: center;
  background: #d9d9d9;
  border-right: 2px solid #3c8060;
  border-bottom: 1px solid #bbb;
  font-weight: bold;
  line-height: 12px;
  color: #2b7450;
}
.th {
  display: flex;
  justify-content: flex-end;
  align-items: center;
  background: #000;
}
.filter {
  width: 11px;
  height: 11px;
  margin-right: 1px;
  display: flex;
  align-items: center;
  justify-content: center;
  background: #b9b9b9;
  border: 1px solid #aaa;
}
.filter::after {
  content: "";
  border: 2px solid transparent;
  border-top: 3px solid #555;
  border-bottom: 0;
}
.filter.lit {
  background: #fff;
}
.td {
  padding: 0 1px;
  background: #c4c4c4;
  border-right: 1px solid #a5a5a5;
  border-bottom: 1px solid #444;
  font: 8.6px/10px "Liberation Sans", sans-serif;
  letter-spacing: 0.07px;
  color: #222;
}
.td.first {
  padding-left: 2px;
}
.td.dark {
  background: #a8a8a8;
  border-right-color: #979797;
}
.td:nth-last-child(-n+10) {
  border-bottom: 0;
}
.edge {
  border-right: 2px solid #1f5b3c !important;
}
.cell {
  border-right: 1px solid #d5d5d5;
  border-bottom: 1px solid #d0d0d0;
}
.v-scroll {
  width: 14px;
  padding: 1px 2px 0;
  display: flex;
  flex-direction: column;
  background: #dcdcdc;
  border-left: 2px solid #f0f0f0;
  height: 447px;
}
.v-scroll span, .h-scroll span {
  width: 10px;
  height: 10px;
  display: flex;
  align-items: center;
  justify-content: center;
  background: #fff;
  border: 1px solid #b5b5b5;
}
.v-scroll .thumb {
  width: 10px;
  height: 43px;
  margin-bottom: auto;
  background: #fff;
  border: 1px solid #b5b5b5;
}
.cursor {
  position: absolute;
  left: 33px;
  top: 18px;
}
.quick {
  position: absolute;
  left: 705px;
  top: 430px;
}

.sheet-tabs {
  height: 20px;
  display: flex;
  align-items: center;
}
.sheet-tabs > .left { margin-left: 17px; }
.sheet-tabs > .right { margin-left: 16px; }
.sheet-tab {
  width: 44px;
  height: 18px;
  margin: 0 22px 2px 26px;
  background: #fff;
  border-bottom: 2px solid #6e9d86;
  text-align: center;
  line-height: 18px;
  font-size: 8.5px;
  font-weight: bold;
  letter-spacing: -0.1px;
  color: #1d6b41;
}
.grip {
  margin-left: 404px;
  width: 14px;
}
.h-scroll {
  display: flex;
  width: 343px;
  height: 10px;
  background: #dcdcdc;
}
.h-scroll .thumb {
  width: 286px;
  margin-right: auto;
  background: #fff;
  border: 1px solid #b5b5b5;
}
.status {
  height: 15px;
  display: flex;
  background: #125b34;
  color: #fff;
  line-height: 14px;
  font-size: 7.5px;
  letter-spacing: -0.1px;
}
.ready {
  width: 661px;
  padding-left: 4px;
}
.count {
  width: 55px;
}
.zoom {
  margin-left: 5px;
}
```
